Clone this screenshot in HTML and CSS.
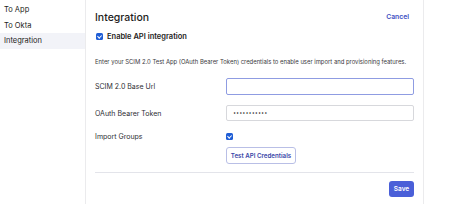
FILE: index.html
```html
<!DOCTYPE html>
<html lang="en">
<head>
  <meta charset="UTF-8">
  <title>Integration</title>
  <link rel="stylesheet" href="styles.css">
</head>
<body>
  <div class="layout">
    <!-- Side nav -->
    <ul class="side-nav">
      <li>To App</li>
      <li>To Okta</li>
      <li class="active">Integration</li>
    </ul>

    <!-- Settings card -->
    <div class="card">
      <div class="card-header">
        <h3>Integration</h3>
        <a class="cancel-link" href="#">Cancel</a>
      </div>

      <label class="enable-row">
        <span class="check"></span>
        <strong>Enable API integration</strong>
      </label>

      <p class="desc">Enter your SCIM 2.0 Test App (OAuth Bearer Token) credentials to enable user import and provisioning features.</p>

      <div class="form">
        <div class="form-row row-url">
          <div class="label">SCIM 2.0 Base Url</div>
          <input type="text" class="text-input focused">
        </div>
        <div class="form-row row-token">
          <div class="label">OAuth Bearer Token</div>
          <input type="password" class="text-input" value="12345678901">
        </div>
        <div class="form-row row-groups">
          <div class="label">Import Groups</div>
          <span class="check"></span>
        </div>
        <div class="form-row row-test">
          <div class="label"></div>
          <button class="test-btn">Test API Credentials</button>
        </div>
      </div>

      <div class="card-footer">
        <button class="save-btn">Save</button>
      </div>
    </div>
  </div>
</body>
</html>
```

FILE: styles.css
```css
body {
  margin: 0;
  font-family: Inter, "Noto Sans", sans-serif;
  background: #fff;
  color: #1d1d21;
}

.layout {
  display: flex;
  height: 204px;
  overflow: hidden;
}

.side-nav {
  list-style: none;
  margin: 0;
  padding: 2px 0 0;
  width: 85px;
  flex: none;
  font-size: 7.5px;
  color: #1d1d21;
}

.side-nav li {
  height: 15.5px;
  line-height: 15.5px;
  padding-left: 4px;
}

.side-nav li.active {
  background: #f2f3f8;
}

.card {
  flex: none;
  width: 319px;
  border-left: 1px solid #ebebed;
  border-right: 1px solid #ebebed;
  padding: 0 9px;
}

.card-header {
  display: flex;
  justify-content: space-between;
  align-items: center;
  height: 32px;
}

.card-header h3 {
  margin: 2px 0 0;
  font-size: 10.5px;
  font-weight: 500;
}

.cancel-link {
  font-size: 6.8px;
  font-weight: 600;
  color: #3f51c3;
  text-decoration: none;
  margin-right: 5px;
}

.check {
  display: inline-block;
  width: 7px;
  height: 7px;
  border-radius: 1.5px;
  background: #1f5ed6;
  position: relative;
  flex: none;
}

.check::after {
  content: "";
  position: absolute;
  left: 2.3px;
  top: 0.8px;
  width: 1.6px;
  height: 3.4px;
  border: solid #fff;
  border-width: 0 1.1px 1.1px 0;
  transform: rotate(45deg);
}

.enable-row {
  display: flex;
  align-items: center;
  gap: 4px;
  font-size: 7.5px;
  padding-left: 1px;
}

.enable-row strong {
  font-weight: 600;
}

.desc {
  margin: 17px 0 0;
  font-size: 5.9px;
  color: #3a3a40;
  white-space: nowrap;
}

.form {
  margin-top: 13px;
}

.form-row {
  display: flex;
  align-items: center;
}

.form-row .label {
  width: 131px;
  flex: none;
  font-size: 7px;
  color: #2d2d33;
}

.row-url { height: 17px; }
.row-token { height: 16px; margin-top: 10px; }
.row-groups { height: 7px; margin-top: 12px; }
.row-test { height: 17px; margin-top: 7px; }

.text-input {
  box-sizing: border-box;
  width: 188px;
  height: 100%;
  border: 1px solid #d7d8dc;
  border-radius: 2px;
  font-family: "DejaVu Sans", sans-serif;
  font-size: 5.3px;
  padding: 0 6px;
  color: #1d1d21;
  outline: none;
}

.text-input.focused {
  border: 1.5px solid #8f9ce2;
}

.test-btn {
  font-family: Inter, sans-serif;
  font-size: 6.2px;
  font-weight: 600;
  color: #3a47a8;
  background: #fff;
  border: 1px solid #b9bfe6;
  border-radius: 3px;
  height: 17px;
  width: 70px;
  padding: 0;
  cursor: pointer;
}

.card-footer {
  margin-top: 8px;
  border-top: 1px solid #e3e4ea;
  padding-top: 8px;
  display: flex;
  justify-content: flex-end;
}

.save-btn {
  font-family: Inter, sans-serif;
  font-size: 6.5px;
  font-weight: 600;
  color: #fff;
  background: #4a5fd8;
  border: none;
  border-radius: 3px;
  height: 16px;
  width: 25px;
  padding: 0;
  cursor: pointer;
}
```
